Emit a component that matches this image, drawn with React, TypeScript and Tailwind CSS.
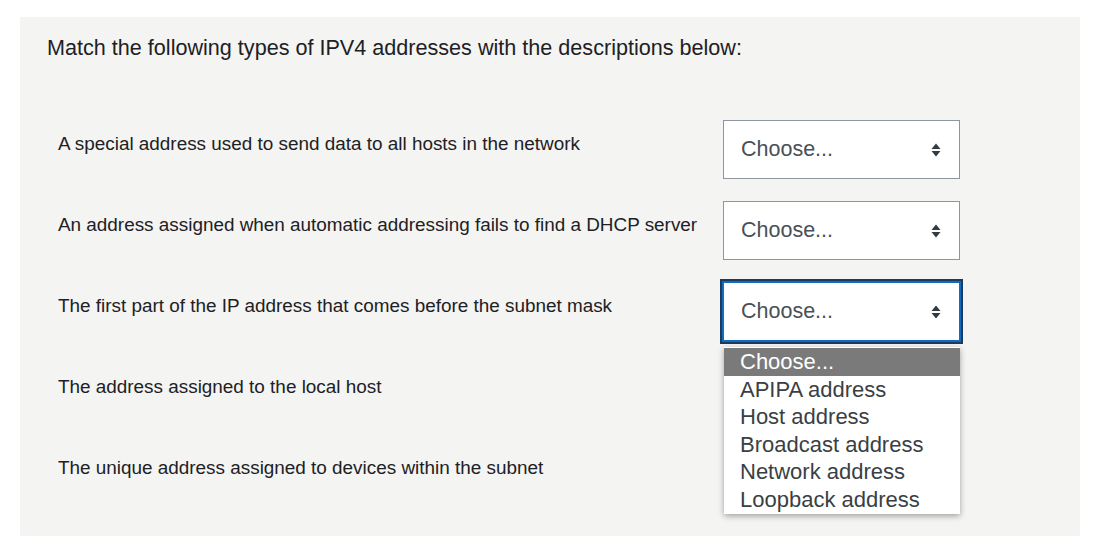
import { useState } from 'react';

const ROWS = [
  'A special address used to send data to all hosts in the network',
  'An address assigned when automatic addressing fails to find a DHCP server',
  'The first part of the IP address that comes before the subnet mask',
  'The address assigned to the local host',
  'The unique address assigned to devices within the subnet',
];

const OPTIONS = [
  'Choose...',
  'APIPA address',
  'Host address',
  'Broadcast address',
  'Network address',
  'Loopback address',
];

function SortArrows() {
  return (
    <svg width="10" height="14" viewBox="0 0 10 14" className="shrink-0">
      <path d="M5 0.5 L9.5 6 L0.5 6 Z" fill="#343a40" />
      <path d="M0.5 8 L9.5 8 L5 13.5 Z" fill="#343a40" />
    </svg>
  );
}

function Select({ focused }: { focused?: boolean }) {
  return (
    <div className="relative">
      <div
        className={`flex items-center justify-between w-[237px] h-[59px] bg-white pl-[17px] pr-[18px] text-[21.5px] text-[#495057] ${
          focused
            ? 'border border-[#0f6cbf] shadow-[0_0_0_1px_#0f6cbf,0_0_0_3px_#1c3b5e]'
            : 'border border-[#8f959e]'
        }`}
      >
        <span>Choose...</span>
        <SortArrows />
      </div>
      {focused && (
        <ul className="absolute left-[1px] top-[65px] z-10 w-[236px] bg-white py-[1px] shadow-[0_2px_6px_rgba(0,0,0,0.35)]">
          {OPTIONS.map((opt, i) => (
            <li
              key={opt}
              className={`h-[27.5px] pl-[16px] text-[22px] leading-[27px] ${
                i === 0 ? 'bg-[#7a7a7a] text-white' : 'text-[#3a3f44]'
              }`}
            >
              {opt}
            </li>
          ))}
        </ul>
      )}
    </div>
  );
}

export default function App() {
  const [focusedRow] = useState(2);

  return (
    <div className="w-full h-[560px] bg-white pt-[17px] pl-[20px] pr-[24px] font-['Liberation_Sans',Arial,sans-serif]">
      <div className="h-[519px] bg-[#f4f4f2] pl-[27px] pt-[18px] text-[#1d2125]">
        <h2 className="text-[21.6px] leading-[26px]">
          Match the following types of IPV4 addresses with the descriptions below:
        </h2>

        <div className="mt-[59px] pl-[11px] flex flex-col gap-[22px]">
          {ROWS.map((text, i) => (
            <div key={text} className="flex items-start">
              <div className="w-[665px] pt-[10px] text-[18.9px] leading-[28px]">{text}</div>
              {i < 3 && <Select focused={i === focusedRow} />}
              {i >= 3 && <div className="h-[59px]" />}
            </div>
          ))}
        </div>
      </div>
    </div>
  );
}
